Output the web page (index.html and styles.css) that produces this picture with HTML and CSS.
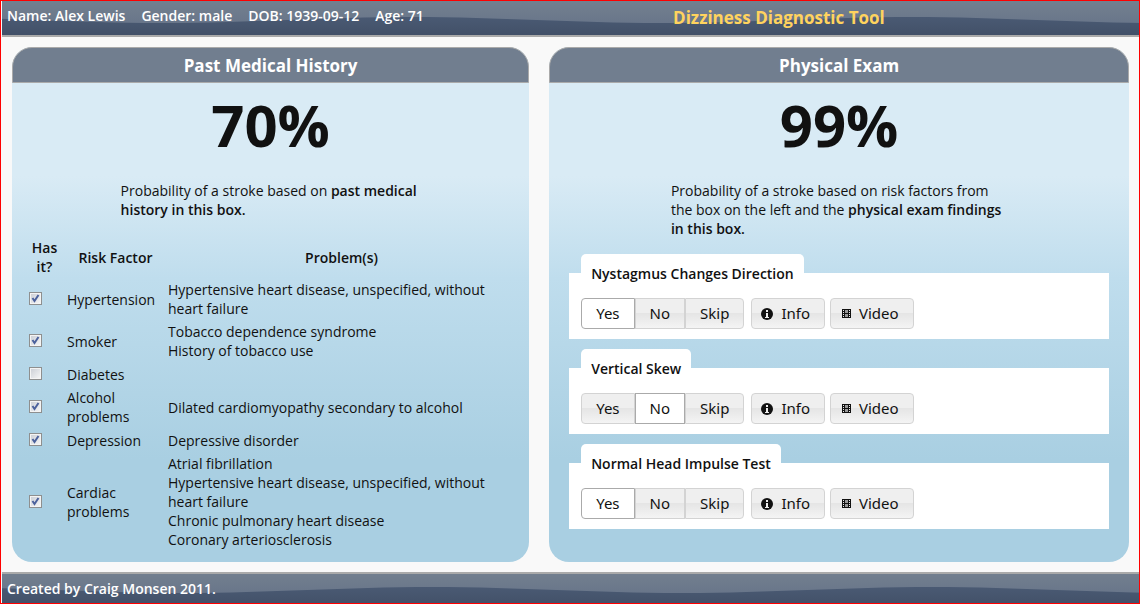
FILE: index.html
```html
<!DOCTYPE html>
<html lang="en">
<head>
    <meta charset="UTF-8">
    <meta name="viewport" content="width=device-width, initial-scale=1.0">
    <title>Dizziness Diagnostic Tool</title>
    <link rel="stylesheet" href="styles.css">
</head>
<body>
    <svg class="sprites" aria-hidden="true">
        <symbol id="icon-info" viewBox="0 0 12 12">
            <circle cx="6" cy="6" r="6" fill="#111"/>
            <path d="M5 2h2v2H5zM5 5h2v4h1v1H4V9h1z" fill="#eee"/>
        </symbol>
        <symbol id="icon-video" viewBox="0 0 9 9">
            <path d="M0 0h9v9H0z" fill="#111"/>
            <path d="M3 1h3v3H3zM3 5h3v3H3z" fill="#999"/>
            <path d="M1 1h1v1H1zM1 3h1v1H1zM1 5h1v1H1zM1 7h1v1H1zM7 1h1v1H7zM7 3h1v1H7zM7 5h1v1H7zM7 7h1v1H7z" fill="#eee"/>
        </symbol>
    </svg>

    <header class="bar top-bar">
        <div class="patient">
            <span>Name: Alex Lewis</span>
            <span>Gender: male</span>
            <span>DOB: 1939-09-12</span>
            <span>Age: 71</span>
        </div>
        <h1>Dizziness Diagnostic Tool</h1>
    </header>

    <main>
        <section class="panel history">
            <h2>Past Medical History</h2>
            <div class="percent">70%</div>
            <p>Probability of a stroke based on <b>past medical history in this box.</b></p>
            <table>
                <thead>
                    <tr>
                        <th class="has">Has it?</th>
                        <th class="factor">Risk Factor</th>
                        <th>Problem(s)</th>
                    </tr>
                </thead>
                <tbody>
                    <tr>
                        <td><input type="checkbox" id="hypertension" checked></td>
                        <td><label for="hypertension">Hypertension</label></td>
                        <td>Hypertensive heart disease, unspecified, without heart failure</td>
                    </tr>
                    <tr>
                        <td><input type="checkbox" id="smoker" checked></td>
                        <td><label for="smoker">Smoker</label></td>
                        <td>Tobacco dependence syndrome<br>History of tobacco use</td>
                    </tr>
                    <tr>
                        <td><input type="checkbox" id="diabetes"></td>
                        <td><label for="diabetes">Diabetes</label></td>
                        <td></td>
                    </tr>
                    <tr>
                        <td><input type="checkbox" id="alcohol" checked></td>
                        <td><label for="alcohol">Alcohol problems</label></td>
                        <td>Dilated cardiomyopathy secondary to alcohol</td>
                    </tr>
                    <tr>
                        <td><input type="checkbox" id="depression" checked></td>
                        <td><label for="depression">Depression</label></td>
                        <td>Depressive disorder</td>
                    </tr>
                    <tr>
                        <td><input type="checkbox" id="cardiac" checked></td>
                        <td><label for="cardiac">Cardiac problems</label></td>
                        <td>Atrial fibrillation<br>Hypertensive heart disease, unspecified, without heart failure<br>Chronic pulmonary heart disease<br>Coronary arteriosclerosis</td>
                    </tr>
                </tbody>
            </table>
        </section>

        <section class="panel exam">
            <h2>Physical Exam</h2>
            <div class="percent">99%</div>
            <p>Probability of a stroke based on risk factors from the box on the left and the <b>physical exam findings in this box.</b></p>

            <fieldset>
                <legend>Nystagmus Changes Direction</legend>
                <div class="controls">
                    <div class="buttonset">
                        <input type="radio" name="nystagmus" id="nystagmus-yes" checked><label for="nystagmus-yes">Yes</label>
                        <input type="radio" name="nystagmus" id="nystagmus-no"><label for="nystagmus-no">No</label>
                        <input type="radio" name="nystagmus" id="nystagmus-skip"><label for="nystagmus-skip">Skip</label>
                    </div>
                    <button type="button"><svg class="info"><use href="#icon-info"/></svg>Info</button>
                    <button type="button"><svg class="video"><use href="#icon-video"/></svg>Video</button>
                </div>
            </fieldset>

            <fieldset>
                <legend>Vertical Skew</legend>
                <div class="controls">
                    <div class="buttonset">
                        <input type="radio" name="skew" id="skew-yes"><label for="skew-yes">Yes</label>
                        <input type="radio" name="skew" id="skew-no" checked><label for="skew-no">No</label>
                        <input type="radio" name="skew" id="skew-skip"><label for="skew-skip">Skip</label>
                    </div>
                    <button type="button"><svg class="info"><use href="#icon-info"/></svg>Info</button>
                    <button type="button"><svg class="video"><use href="#icon-video"/></svg>Video</button>
                </div>
            </fieldset>

            <fieldset>
                <legend>Normal Head Impulse Test</legend>
                <div class="controls">
                    <div class="buttonset">
                        <input type="radio" name="impulse" id="impulse-yes" checked><label for="impulse-yes">Yes</label>
                        <input type="radio" name="impulse" id="impulse-no"><label for="impulse-no">No</label>
                        <input type="radio" name="impulse" id="impulse-skip"><label for="impulse-skip">Skip</label>
                    </div>
                    <button type="button"><svg class="info"><use href="#icon-info"/></svg>Info</button>
                    <button type="button"><svg class="video"><use href="#icon-video"/></svg>Video</button>
                </div>
            </fieldset>
        </section>
    </main>

    <footer class="bar bottom-bar">Created by Craig Monsen 2011.</footer>
</body>
</html>
```
FILE: styles.css
```css
* {
    box-sizing: border-box;
}
body {
    margin: 0;
    padding-left: 1px;
    min-height: 100vh;
    display: flex;
    flex-direction: column;
    border: 1px solid #f00;
    background-color: #f9f9f9;
    color: #111;
    font-family: "Open Sans", "Noto Sans", sans-serif;
    font-size: 14px;
    line-height: 19px;
}
b, th, legend {
    font-weight: 650;
}
.sprites {
    display: none;
}

/* header and footer */
.bar {
    padding: 0 5px;
    background-color: #45546c;
    background-image: url("data:image/svg+xml,%3Csvg xmlns='http://www.w3.org/2000/svg' width='500' height='40'%3E%3ClinearGradient id='g' x2='0' y2='1'%3E%3Cstop stop-color='%2373808f'/%3E%3Cstop offset='1' stop-color='%2369768a'/%3E%3C/linearGradient%3E%3ClinearGradient id='d' x2='0' y2='1'%3E%3Cstop offset='.4' stop-color='%234a5a73'/%3E%3Cstop offset='.9' stop-color='%23414f67'/%3E%3C/linearGradient%3E%3Cpath fill='url(%23d)' d='M0 0h500v40H0z'/%3E%3Cpath fill='url(%23g)' d='M0 0H500V22C410 22 340 16 250 16C160 16 90 22 0 22z'/%3E%3C/svg%3E");
    background-repeat: repeat-x;
    color: #fff;
    font-weight: 650;
}
.top-bar {
    display: flex;
    height: 36px;
    padding-top: 5px;
    border-bottom: 2px solid #aaa;
    background-position: 160px 0;
}
.patient {
    display: flex;
    gap: 16px;
}
h1 {
    flex: 1;
    margin: 0;
    padding-top: 1px;
    color: #ffd35e;
    font-size: 17px;
    line-height: 22px;
    text-align: center;
}
.bottom-bar {
    height: 31px;
    padding-top: 5px;
    border-top: 2px solid #aaa;
    background-position: 180px -3px;
}

/* panels */
main {
    flex: 1;
    display: grid;
    grid-template-columns: 33fr 37fr;
    gap: 20px;
    padding: 10px;
}
.panel {
    border-radius: 20px;
    background: linear-gradient(#d9ebf5 25%, #bfdded 45%, #a9cfe2 80%);
}
h2 {
    height: 36px;
    margin: 0;
    border: 1px solid #aaa;
    border-radius: 20px 20px 0 0;
    background-color: #717e8f;
    color: #fff;
    font-size: 17px;
    line-height: 35px;
    text-align: center;
}
.percent {
    margin: 2px 0 16px;
    font-size: 58px;
    font-weight: bold;
    line-height: 80px;
    text-align: center;
}
.panel p {
    width: 58%;
    margin: 0 auto;
}

/* risk factors */
.history {
    padding-bottom: 9px;
}
table {
    width: calc(100% - 22px);
    margin: 16px auto 0;
    table-layout: fixed;
}
th, td {
    padding: 1px;
}
.has {
    width: 39px;
}
.factor {
    width: 99px;
}
input[type="checkbox"] {
    appearance: none;
    display: block;
    width: 13px;
    height: 13px;
    margin: 3px 3px 4px;
    border: 1px solid #8e8f8f;
    box-shadow: inset 0 0 0 1px #f4f4f4;
    background: linear-gradient(135deg, #c9cdd4, #f8f8f8);
}
input[type="checkbox"]:checked {
    background: url("data:image/svg+xml,%3Csvg xmlns='http://www.w3.org/2000/svg' width='11' height='11'%3E%3Cpath d='M2.5 5l2 3L8.500 2' fill='none' stroke='%234b619c' stroke-width='2'/%3E%3C/svg%3E"), linear-gradient(135deg, #c9cdd4, #f8f8f8);
}

/* exam findings */
fieldset {
    margin: 0 20px 10px;
    padding: 6px 12px 10px;
    border: 0;
    background-color: #fff;
}
.exam p {
    margin-bottom: 16px;
}
legend {
    padding: 10px 10px 9px;
    border-radius: 5px 5px 0 0;
    background-color: #fff;
}
.controls {
    display: flex;
    gap: 5px;
}
.buttonset {
    display: flex;
    margin-right: 2px;
}
.buttonset input {
    position: absolute;
    opacity: 0;
}
.buttonset label, button {
    height: 31px;
    border: 1px solid #d3d3d3;
    background: linear-gradient(#efefef 50%, #e5e5e5 50%, #f4f4f4);
    color: #111;
    font-family: "Noto Sans", sans-serif;
    font-size: 15px;
    line-height: 29px;
    cursor: pointer;
}
.buttonset label {
    padding: 0 14px;
}
.buttonset label:first-of-type {
    border-radius: 4px 0 0 4px;
}
.buttonset label:last-of-type {
    border-radius: 0 4px 4px 0;
}
.buttonset input:checked + label {
    border-color: #aaa;
    background: #fff;
}
button {
    display: flex;
    align-items: center;
    padding: 0 14px 0 9px;
    border-radius: 4px;
}
button svg {
    margin-right: 8px;
}
.info {
    width: 12px;
    height: 12px;
}
.video {
    width: 9px;
    height: 9px;
    margin-left: 2px;
}
```
